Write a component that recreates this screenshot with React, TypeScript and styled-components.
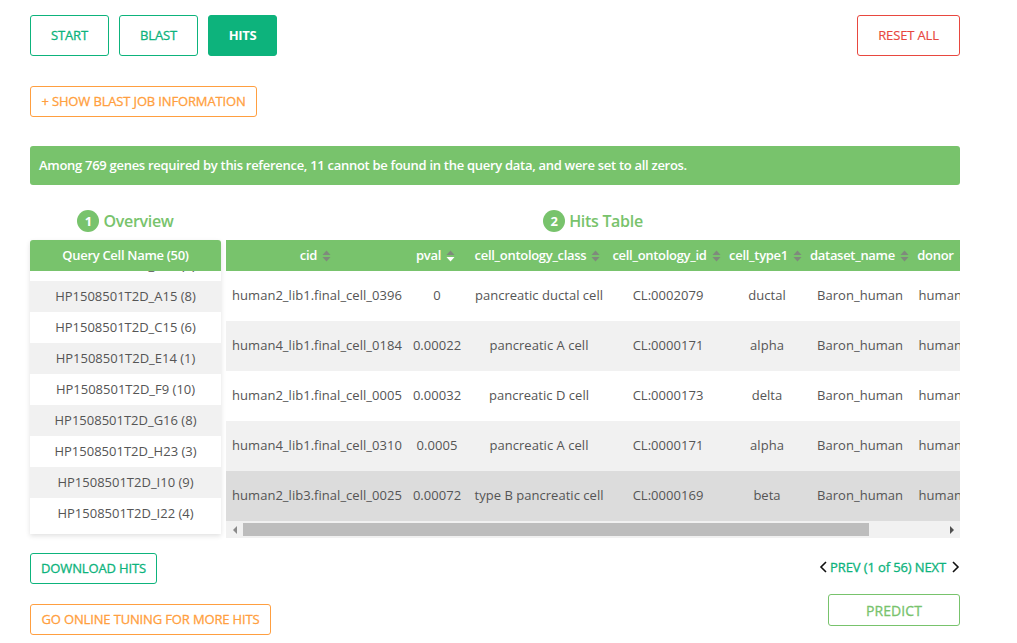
import { FC } from 'react';
import styled, { createGlobalStyle } from 'styled-components';

const GREEN = '#78c36c';
const TEAL = '#0db37c';
const ORANGE = '#ff9f40';

const GlobalStyle = createGlobalStyle`
  html, body {
    margin: 0;
    padding: 0;
    background: #fff;
    font-family: "Open Sans", "Liberation Sans", sans-serif;
    color: #555;
  }
`;

const Page = styled.div`
  width: 960px;
  height: 643px;
  overflow: hidden;
  padding: 15px 0 0 30px;
  box-sizing: border-box;
`;

const TopBar = styled.div`
  display: flex;
  gap: 10px;
  height: 41px;
`;

const Button = styled.button<{ $color: string; $w?: number; $h?: number; $filled?: boolean }>`
  box-sizing: border-box;
  width: ${(p) => (p.$w ? `${p.$w}px` : 'auto')};
  height: ${(p) => p.$h ?? 31}px;
  padding: 0 10px 2px;
  border: 1px solid ${(p) => p.$color};
  border-radius: 3px;
  background: ${(p) => (p.$filled ? p.$color : '#fff')};
  color: ${(p) => (p.$filled ? '#fff' : p.$color)};
  font-family: inherit;
  font-size: 13px;
  font-weight: ${(p) => (p.$filled ? 700 : 400)};
  letter-spacing: ${(p) => (p.$filled ? '-0.3px' : '-0.15px')};
  -webkit-text-stroke: ${(p) => (p.$filled ? '0' : '0.3px')};
  white-space: nowrap;
`;

const ResetButton = styled(Button)`
  margin-left: auto;
  -webkit-text-stroke: 0.15px;
`;

const PredictButton = styled(Button)`
  padding-bottom: 0;
  font-size: 14px;
  letter-spacing: 0.1px;
`;

const InfoRow = styled.div`
  margin-top: 30px;
  display: flex;
`;

const Alert = styled.div`
  margin-top: 29px;
  height: 39px;
  line-height: 39px;
  padding-left: 9px;
  border-radius: 3px;
  background: ${GREEN};
  color: #fff;
  font-size: 13px;
  font-weight: 600;
  letter-spacing: -0.29px;
`;

const Panels = styled.div`
  margin-top: 25px;
  display: grid;
  grid-template-columns: 191px 734px;
  column-gap: 5px;
`;

const PanelTitle = styled.div`
  height: 30px;
  display: flex;
  justify-content: center;
  align-items: flex-start;
  gap: 4px;
  color: ${GREEN};
  font-size: 16px;
  font-weight: 600;
  line-height: 22px;
  letter-spacing: -0.3px;
`;

const Step = styled.span`
  width: 22px;
  height: 22px;
  border-radius: 50%;
  background: ${GREEN};
  color: #fff;
  font-size: 13px;
  font-weight: 700;
  line-height: 22px;
  text-align: center;
  letter-spacing: 0;
`;

const ListPanel = styled.div`
  width: 191px;
  height: 294px;
  border-radius: 3px 3px 0 0;
  background: #fff;
  box-shadow: 0 2px 5px rgba(0, 0, 0, 0.12);
`;

const ListHeader = styled.div`
  height: 31px;
  line-height: 31px;
  border-radius: 3px 3px 0 0;
  background: ${GREEN};
  color: #fff;
  font-size: 13px;
  font-weight: 600;
  text-align: center;
  letter-spacing: -0.3px;
`;

const ListViewport = styled.div`
  height: 258px;
  overflow: hidden;
`;

const ListTrack = styled.div`
  margin-top: -21px;
`;

const ListItem = styled.div<{ $striped: boolean }>`
  height: 31px;
  line-height: 31px;
  background: ${(p) => (p.$striped ? '#f1f1f1' : '#fff')};
  font-size: 13px;
  text-align: center;
`;

const TableWrap = styled.div`
  width: 734px;
  overflow: hidden;
`;

const Table = styled.table`
  table-layout: fixed;
  width: 752px;
  border-collapse: collapse;
  border-spacing: 0;
`;

const HeadRow = styled.tr`
  height: 31px;
  background: ${GREEN};
`;

const HeadCell = styled.th`
  padding: 0 3px 2px 0;
  color: #fff;
  font-size: 13px;
  font-weight: 600;
  letter-spacing: -0.3px;
  white-space: nowrap;
  text-align: center;
`;

const Row = styled.tr<{ $bg: string }>`
  height: 50px;
  background: ${(p) => p.$bg};
`;

const Cell = styled.td`
  padding: 0 0 2px;
  font-size: 13px;
  letter-spacing: 0.03px;
  white-space: nowrap;
  text-align: center;
`;

const SortIcon = styled.svg`
  width: 9px;
  height: 12px;
  margin-left: 5px;
  vertical-align: -2px;
`;

const Scrollbar = styled.div`
  height: 17px;
  background: #f1f1f1;
  display: flex;
  align-items: center;
`;

const ScrollButton = styled.div`
  width: 17px;
  height: 17px;
  flex: none;
  display: flex;
  align-items: center;
  justify-content: center;
`;

const ScrollThumb = styled.div`
  width: 626px;
  height: 13px;
  background: #bdbdbd;
`;

const ScrollGap = styled.div`
  flex: 1;
`;

const Footer = styled.div`
  margin-top: 15px;
  display: flex;
  justify-content: space-between;
`;

const FooterLeft = styled.div`
  display: flex;
  flex-direction: column;
  align-items: flex-start;
  gap: 20px;
`;

const FooterRight = styled.div`
  display: flex;
  flex-direction: column;
  align-items: flex-end;
  gap: 13px;
`;

const Pager = styled.div`
  height: 28px;
  display: flex;
  align-items: center;
  gap: 2px;
  color: ${TEAL};
  font-size: 13px;
  font-weight: 400;
  letter-spacing: -0.12px;
  -webkit-text-stroke: 0.3px;
`;

const Chevron = styled.svg`
  width: 9px;
  height: 12px;
  flex: none;
`;

const NextChevron = styled(Chevron)`
  margin-left: 3px;
`;

const Sort: FC<{ active?: boolean }> = ({ active }) => (
  <SortIcon viewBox="0 0 9 12">
    <path d="M4.5 0.5 L8.5 5 H0.5 Z" fill="#7f8a7c" />
    <path d="M4.5 11.5 L8.5 7 H0.5 Z" fill={active ? '#fff' : '#7f8a7c'} />
  </SortIcon>
);

const columns = [
  { name: 'cid', width: 182 },
  { name: 'pval', width: 58, active: true },
  { name: 'cell_ontology_class', width: 146 },
  { name: 'cell_ontology_id', width: 112 },
  { name: 'cell_type1', width: 86 },
  { name: 'dataset_name', width: 100 },
  { name: 'donor', width: 68 },
];

const hits = [
  ['human2_lib1.final_cell_0396', '0', 'pancreatic ductal cell', 'CL:0002079', 'ductal'],
  ['human4_lib1.final_cell_0184', '0.00022', 'pancreatic A cell', 'CL:0000171', 'alpha'],
  ['human2_lib1.final_cell_0005', '0.00032', 'pancreatic D cell', 'CL:0000173', 'delta'],
  ['human4_lib1.final_cell_0310', '0.0005', 'pancreatic A cell', 'CL:0000171', 'alpha'],
  ['human2_lib3.final_cell_0025', '0.00072', 'type B pancreatic cell', 'CL:0000169', 'beta'],
];

const queryCells = [
  'HP1508501T2D_A14 (4)',
  'HP1508501T2D_A15 (8)',
  'HP1508501T2D_C15 (6)',
  'HP1508501T2D_E14 (1)',
  'HP1508501T2D_F9 (10)',
  'HP1508501T2D_G16 (8)',
  'HP1508501T2D_H23 (3)',
  'HP1508501T2D_I10 (9)',
  'HP1508501T2D_I22 (4)',
];

const rowColor = (i: number) => {
  if (i === 4) return '#dcdcdc';
  return i % 2 === 1 ? '#f1f1f1' : '#fff';
};

const App: FC = () => {
  return (
    <Page>
      <GlobalStyle />
      <TopBar>
        <Button $color={TEAL} $w={79} $h={41}>START</Button>
        <Button $color={TEAL} $w={79} $h={41}>BLAST</Button>
        <Button $color={TEAL} $w={69} $h={41} $filled>HITS</Button>
        <ResetButton $color="#e8473f" $w={103} $h={41}>RESET ALL</ResetButton>
      </TopBar>

      <InfoRow>
        <Button $color={ORANGE} $w={227}>+ SHOW BLAST JOB INFORMATION</Button>
      </InfoRow>

      <Alert>Among 769 genes required by this reference, 11 cannot be found in the query data, and were set to all zeros.</Alert>

      <Panels>
        <PanelTitle><Step>1</Step>Overview</PanelTitle>
        <PanelTitle><Step>2</Step>Hits Table</PanelTitle>

        <ListPanel>
          <ListHeader>Query Cell Name (50)</ListHeader>
          <ListViewport>
            <ListTrack>
              {queryCells.map((name, i) => (
                <ListItem key={name} $striped={i % 2 === 1}>{name}</ListItem>
              ))}
            </ListTrack>
          </ListViewport>
        </ListPanel>

        <TableWrap>
          <Table>
            <colgroup>
              {columns.map((c) => <col key={c.name} width={c.width} />)}
            </colgroup>
            <thead>
              <HeadRow>
                {columns.map((c) => (
                  <HeadCell key={c.name}>{c.name}<Sort active={c.active} /></HeadCell>
                ))}
              </HeadRow>
            </thead>
            <tbody>
              {hits.map((hit, i) => (
                <Row key={hit[0]} $bg={rowColor(i)}>
                  {hit.map((value, j) => <Cell key={j}>{value}</Cell>)}
                  <Cell>Baron_human</Cell>
                  <Cell>human1</Cell>
                </Row>
              ))}
            </tbody>
          </Table>
          <Scrollbar>
            <ScrollButton>
              <svg width="6" height="8" viewBox="0 0 6 8"><path d="M5 0 V8 L1 4 Z" fill="#8a8a8a" /></svg>
            </ScrollButton>
            <ScrollThumb />
            <ScrollGap />
            <ScrollButton>
              <svg width="6" height="8" viewBox="0 0 6 8"><path d="M1 0 V8 L5 4 Z" fill="#505050" /></svg>
            </ScrollButton>
          </Scrollbar>
        </TableWrap>
      </Panels>

      <Footer>
        <FooterLeft>
          <Button $color={TEAL} $w={127}>DOWNLOAD HITS</Button>
          <Button $color={ORANGE} $w={241}>GO ONLINE TUNING FOR MORE HITS</Button>
        </FooterLeft>
        <FooterRight>
          <Pager>
            <Chevron viewBox="0 0 9 12"><path d="M7 1 L2 6 L7 11" fill="none" stroke="#111" strokeWidth="1.6" /></Chevron>
            PREV (1 of 56) NEXT
            <NextChevron viewBox="0 0 9 12"><path d="M2 1 L7 6 L2 11" fill="none" stroke="#111" strokeWidth="1.6" /></NextChevron>
          </Pager>
          <PredictButton $color={GREEN} $w={132} $h={32}>PREDICT</PredictButton>
        </FooterRight>
      </Footer>
    </Page>
  );
};

export default App;
